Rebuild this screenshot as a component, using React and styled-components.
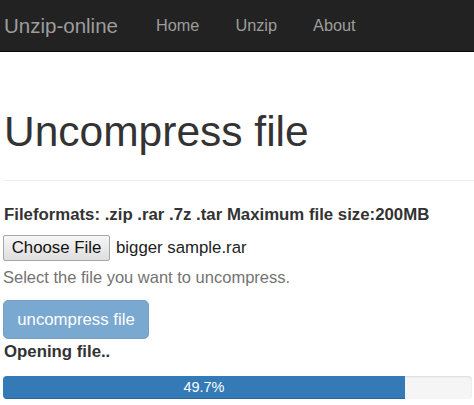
import React from "react";
import styled, { createGlobalStyle } from "styled-components";

const GlobalStyle = createGlobalStyle`
  body {
    margin: 0;
    background: #fff;
    font-family: "Liberation Sans", Arial, sans-serif;
    color: #333;
  }
`;

export default function App() {
  const progress = 85.7;
  return (
    <>
      <GlobalStyle />
      <Navbar>
        <Brand>Unzip-online</Brand>
        <NavLinks>
          <NavLink>Home</NavLink>
          <NavLink>Unzip</NavLink>
          <NavLink>About</NavLink>
        </NavLinks>
      </Navbar>
      <Content>
        <Title>Uncompress file</Title>
        <Rule />
        <Label>Fileformats: .zip .rar .7z .tar Maximum file size:200MB</Label>
        <FileRow>
          <FileButton type="button">Choose File</FileButton>
          <FileName>bigger sample.rar</FileName>
        </FileRow>
        <Help>Select the file you want to uncompress.</Help>
        <PrimaryButton type="button" disabled>
          uncompress file
        </PrimaryButton>
        <Status>Opening file..</Status>
        <Progress>
          <ProgressFill style={{ width: `${progress}%` }}>49.7%</ProgressFill>
        </Progress>
      </Content>
    </>
  );
}

const Navbar = styled.nav`
  display: flex;
  align-items: center;
  height: 52px;
  background-color: #222;
  border-bottom: 1px solid #080808;
  box-sizing: border-box;
  padding-left: 4px;
`;

const Brand = styled.a`
  font-size: 20.5px;
  color: #9d9d9d;
  margin-right: 20px;
`;

const NavLinks = styled.div`
  display: flex;
`;

const NavLink = styled.a`
  font-size: 16.3px;
  color: #9d9d9d;
  padding: 0 18px;
`;

const Content = styled.div`
  padding: 0 2px 0 3px;
`;

const Title = styled.h1`
  margin: 57px 0 0 1px;
  font-size: 42.5px;
  font-weight: 400;
  line-height: 1.1;
  color: #333;
`;

const Rule = styled.hr`
  margin: 24px -2px 22px 0;
  border: 0;
  border-top: 1px solid #eee;
`;

const Label = styled.div`
  font-size: 16.8px;
  font-weight: 700;
  line-height: 1.4;
  margin-left: 1px;
`;

const FileRow = styled.div`
  display: flex;
  align-items: center;
  margin-top: 9px;
  gap: 6px;
`;

const FileButton = styled.button`
  height: 26px;
  width: 107px;
  padding: 0;
  font-family: inherit;
  font-size: 16.8px;
  color: #111;
  background: linear-gradient(#f6f6f6, #dedede);
  border: 1px solid #a6a6a6;
  border-radius: 2px;
`;

const FileName = styled.span`
  font-size: 16.8px;
  color: #222;
`;

const Help = styled.p`
  margin: 5px 0 0;
  font-size: 16.5px;
  line-height: 1.4;
  color: #737373;
`;

const PrimaryButton = styled.button`
  margin-top: 11px;
  display: block;
  width: 146px;
  height: 39px;
  padding: 0;
  font-family: inherit;
  font-size: 16.8px;
  color: #fff;
  background-color: #337ab7;
  border: 1px solid #2e6da4;
  border-radius: 5px;
  opacity: 0.65;
`;

const Status = styled.div`
  font-size: 16.8px;
  font-weight: 700;
  line-height: 1.4;
  margin-top: 1px;
  margin-left: 1px;
`;

const Progress = styled.div`
  margin-top: 12px;
  height: 23px;
  background-color: #f5f5f5;
  border-radius: 4px;
  overflow: hidden;
  box-shadow: inset 0 1px 2px rgba(0, 0, 0, 0.1);
`;

const ProgressFill = styled.div`
  height: 100%;
  background-color: #337ab7;
  color: #fff;
  font-size: 14.5px;
  line-height: 23px;
  text-align: center;
  box-shadow: inset 0 -1px 0 rgba(0, 0, 0, 0.15);
`;
